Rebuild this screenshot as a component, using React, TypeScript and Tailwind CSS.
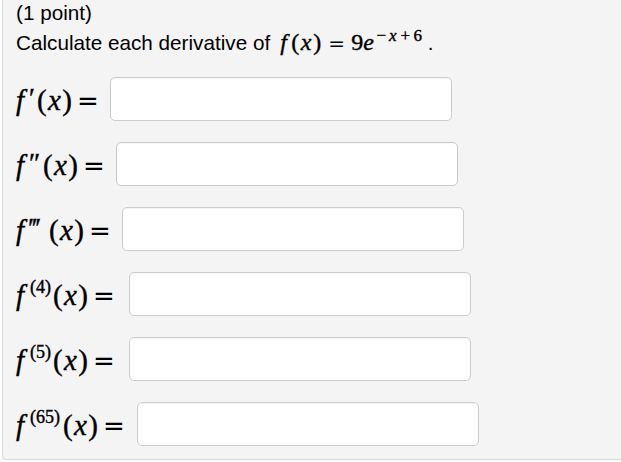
import React from "react";

type Row = { sup: React.ReactNode; supW: string; labelW: string };

const prime = (p: string) => (
  <span className="relative -top-[3px] pl-[1px] text-[27px] tracking-[2px]">{p}</span>
);
const order = (n: string) => (
  <span className="relative -top-[12px] pl-[2px] text-[18px]">({n})</span>
);

const rows: Row[] = [
  { sup: prime("′"), supW: "w-[8px]", labelW: "w-[94px]" },
  { sup: prime("″"), supW: "w-[14px]", labelW: "w-[100px]" },
  { sup: prime("‴"), supW: "w-[20px]", labelW: "w-[106px]" },
  { sup: order("4"), supW: "w-[24px]", labelW: "w-[113px]" },
  { sup: order("5"), supW: "w-[24px]", labelW: "w-[113px]" },
  { sup: order("65"), supW: "w-[34px]", labelW: "w-[121px]" },
];

function MathLabel({ row }: { row: Row }) {
  return (
    <div
      className={`${row.labelW} h-[44px] shrink-0 whitespace-nowrap pt-[1px] [font-family:'Liberation_Serif',serif] text-[29px] leading-[44px] text-black [-webkit-text-stroke:0.4px_black]`}
    >
      <span className="inline-block w-[12px] italic leading-none">f</span>
      <span className={`inline-block ${row.supW} leading-none`}>{row.sup}</span>
      <span className="ml-[1px] inline-flex w-[35px] justify-between leading-none">
        <span>(</span>
        <span className="italic">x</span>
        <span>)</span>
      </span>
      <span className="ml-[5px] inline-block w-[20px] text-center [font-family:'DejaVu_Sans',sans-serif] text-[26px] leading-none [-webkit-text-stroke:0px]">
        =
      </span>
    </div>
  );
}

export default function App() {
  return (
    <div className="h-[462px] w-[621px] overflow-hidden bg-white">
      <div className="ml-[2px] h-[460px] rounded-bl-[4px] border-b border-l border-[#d9d9d9] bg-[#f4f4f4] pl-[13px] pt-[1px]">
        <p className="[font-family:'Liberation_Sans',Arial,sans-serif] text-[20.7px] leading-[24px] text-black">
          (1 point)
        </p>
        <p className="mt-[5px] whitespace-nowrap [font-family:'Liberation_Sans',Arial,sans-serif] text-[20.7px] leading-[24px] text-black">
          Calculate each derivative of
          <span className="ml-[10px] [font-family:'Liberation_Serif',serif] text-[24px] leading-none [-webkit-text-stroke:0.4px_black]">
            <span className="inline-block w-[11px] italic">f</span>
            <span className="inline-flex w-[30px] justify-between">
              <span>(</span>
              <span className="italic">x</span>
              <span>)</span>
            </span>
            <span className="ml-[7px] inline-block w-[17px] text-center [font-family:'DejaVu_Sans',sans-serif] text-[20px] [-webkit-text-stroke:0px]">
              =
            </span>
            <span className="ml-[6px]">9</span>
            <span className="italic">e</span>
            <span className="relative -top-[9px] ml-[1px] inline-flex text-[17px]">
              <span className="inline-block w-[13px] text-center">−</span>
              <span className="inline-block w-[10px] text-center italic">x</span>
              <span className="inline-block w-[15px] text-center">+</span>
              <span className="inline-block w-[10px] text-center">6</span>
            </span>
          </span>
          <span className="ml-[5px]">.</span>
        </p>
        <div className="mt-[22px] flex flex-col gap-[21px]">
          {rows.map((r, i) => (
            <div key={i} className="flex items-start">
              <MathLabel row={r} />
              <div className="h-[44px] w-[342px] rounded-[5px] border border-[#cccccc] bg-white shadow-[inset_0_1px_1px_rgba(0,0,0,0.04)]" />
            </div>
          ))}
        </div>
      </div>
    </div>
  );
}
